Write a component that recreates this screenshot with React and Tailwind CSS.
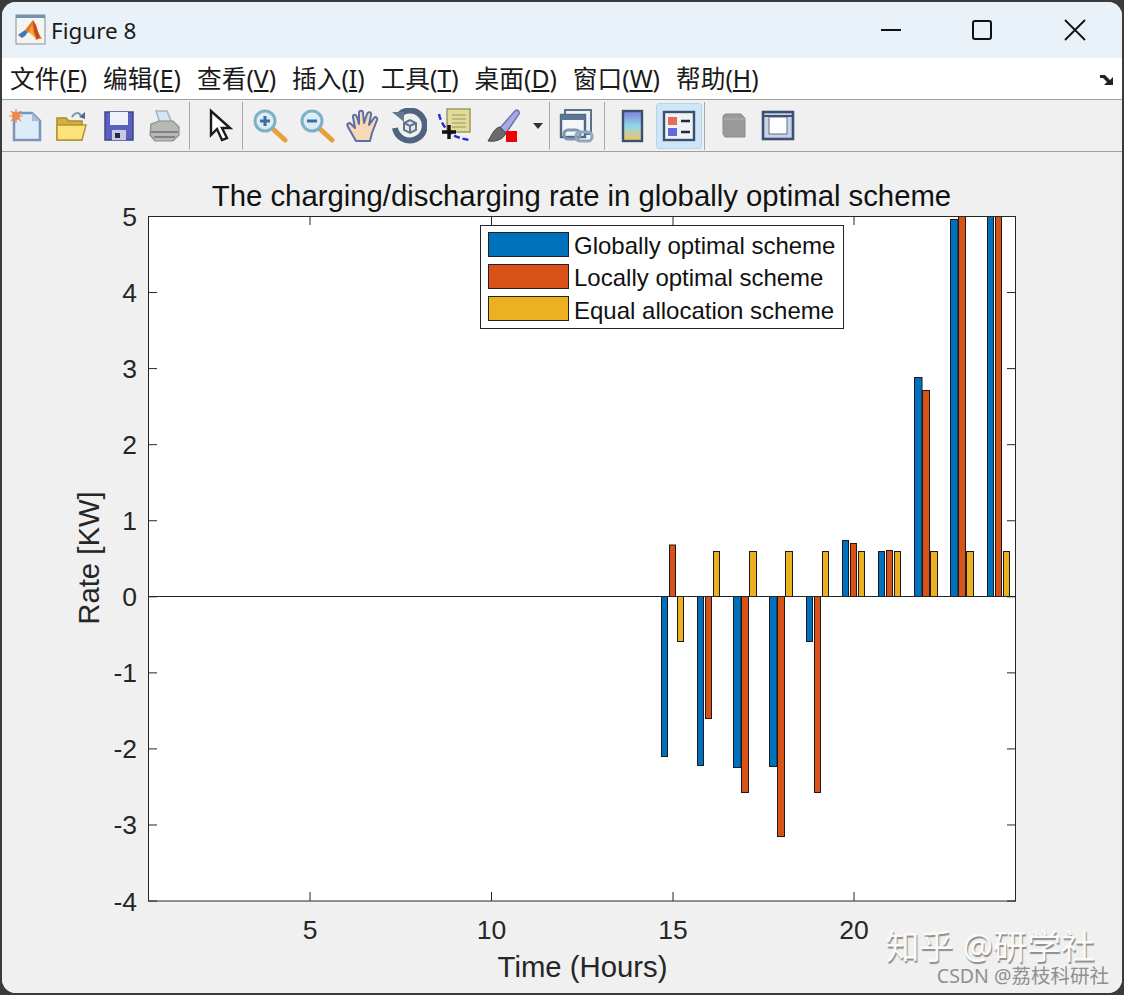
import React from "react";

const BLUE = "#0072bd";
const ORANGE = "#d95319";
const YELLOW = "#edb120";
const ZERO = 596.5;

// each bar: x, right edge, tip y
const bars = [
  [661.5, 667.5, 756.5, BLUE], [669.5, 675.5, 545, ORANGE], [677.5, 683.5, 641.5, YELLOW],
  [697.5, 703.5, 765.5, BLUE], [705.5, 711.5, 718.5, ORANGE], [713.5, 719.5, 551.5, YELLOW],
  [733.5, 741, 767.5, BLUE], [741.5, 748.5, 792.5, ORANGE], [749.5, 756.5, 551.5, YELLOW],
  [769.5, 777, 766.5, BLUE], [777.5, 784.5, 836.5, ORANGE], [785.5, 792.5, 551.5, YELLOW],
  [806.5, 812.5, 641.5, BLUE], [814.5, 820.5, 792.5, ORANGE], [822.5, 828.5, 551.5, YELLOW],
  [842.5, 848.5, 540.5, BLUE], [850.5, 856.5, 543.5, ORANGE], [858.5, 864.5, 551.5, YELLOW],
  [878.5, 884.5, 551.5, BLUE], [886.5, 892.5, 550.5, ORANGE], [894.5, 900.5, 551.5, YELLOW],
  [914.5, 922, 377.5, BLUE], [922.5, 929.5, 390.5, ORANGE], [930.5, 937.5, 551.5, YELLOW],
  [950.5, 958, 219.5, BLUE], [958.5, 965.5, 216.5, ORANGE], [966.5, 973.5, 551.5, YELLOW],
  [987.5, 993.5, 216.5, BLUE], [995.5, 1001.5, 216.5, ORANGE], [1003.5, 1009.5, 551.5, YELLOW],
];

const yTicks = [5, 4, 3, 2, 1, 0, -1, -2, -3, -4];
const xTicks = [[5, 310], [10, 491.5], [15, 673], [20, 854]];

const menus = [
  ["文件(", "F"], ["编辑(", "E"], ["查看(", "V"], ["插入(", "I"],
  ["工具(", "T"], ["桌面(", "D"], ["窗口(", "W"], ["帮助(", "H"],
];

function MatlabIcon() {
  return (
    <svg width="32" height="32" viewBox="0 0 32 32" className="shrink-0">
      <rect x="1" y="1" width="29" height="29" fill="#f4f4f2" stroke="#8a9098" />
      <rect x="1" y="1" width="29" height="3" fill="#6f93b5" />
      <path d="M3 21 10 16 13 18 10 22 7 24Z" fill="#3f78b4" />
      <path d="M10 16 18 6 23 18 27 25 22 24 17 20 13 18Z" fill="#e8762a" />
      <path d="M18 6 21 11 25 24 21 26 19 17Z" fill="#c8481c" />
      <path d="M14 18 17 11 19 19 22 26 17 21Z" fill="#f3a53a" />
    </svg>
  );
}

function NewIcon() {
  return (
    <svg width="34" height="34" viewBox="0 0 34 34" className="ml-[9px] shrink-0">
      <path d="M5 4H23L31 12V31H5Z" fill="#dcecfa" stroke="#7d93b8" strokeWidth="2.5" />
      <path d="M23 4V12H31Z" fill="#a9bcd6" />
      <circle cx="7" cy="7" r="4" fill="#ef8a4a" />
      <path d="M7 0V14M0 7H14M2 2 12 12M12 2 2 12" stroke="#ef8a4a" strokeWidth="1.2" />
    </svg>
  );
}

function OpenIcon() {
  return (
    <svg width="34" height="34" viewBox="0 0 34 34" className="ml-[11px] shrink-0">
      <path d="M3 9H12L15 12H28V31H3Z" fill="#d4b03c" stroke="#a88c2c" strokeWidth="1.5" />
      <path d="M3 31 3 16H32L28 31Z" fill="#fbe27a" stroke="#b3952f" strokeWidth="1.5" />
      <path d="M18 8C21 3 25 3 27 7" fill="none" stroke="#7f93a8" strokeWidth="2" />
      <path d="M25 8 31 3V10Z" fill="#4b6a90" />
    </svg>
  );
}

function SaveIcon() {
  return (
    <svg width="34" height="34" viewBox="0 0 34 34" className="ml-[14px] shrink-0">
      <path d="M3 3H31V31H3Z" fill="#5a5fc0" stroke="#3d4690" strokeWidth="1.5" />
      <rect x="8" y="3" width="18" height="13" fill="#eef0fa" />
      <rect x="10" y="21" width="14" height="10" fill="#c8cbe0" />
      <rect x="13" y="24" width="5" height="5" fill="#25284a" />
    </svg>
  );
}

function PrintIcon() {
  return (
    <svg width="34" height="34" viewBox="0 0 34 34" className="ml-[11px] shrink-0">
      <path d="M9 2H20L25 14H13Z" fill="#d6e4f2" stroke="#9fb3c6" strokeWidth="1.5" />
      <path d="M4 15 12 12H26L32 18V26L26 32H8L3 26Z" fill="#b8b8b6" stroke="#8b8b88" strokeWidth="1.2" />
      <path d="M4 23H31M7 28H28" stroke="#6f6f6d" strokeWidth="1.5" />
    </svg>
  );
}

function PointerIcon() {
  return (
    <svg width="26" height="36" viewBox="0 0 26 36" className="ml-[17px] shrink-0">
      <path d="M4 3V27L10 21 15 32 20 30 15 20H23Z" fill="#fff" stroke="#1c1c1c" strokeWidth="2.4" strokeLinejoin="miter" />
    </svg>
  );
}

function ZoomIcon({ minus, className }) {
  return (
    <svg width="36" height="36" viewBox="0 0 36 36" className={className}>
      <path d="M21 21 33 32" stroke="#e59f3c" strokeWidth="5" strokeLinecap="round" />
      <circle cx="13" cy="13" r="10" fill="#dcecf6" stroke="#7fb0c8" strokeWidth="3" />
      <path d={minus ? "M8 13H18" : "M8 13H18M13 8V18"} stroke="#3a6f9f" strokeWidth="3" />
    </svg>
  );
}

function HandIcon() {
  return (
    <svg width="36" height="36" viewBox="0 0 36 36" className="ml-[10px] shrink-0">
      <path
        d="M11 33 3 19C1 16 4 14 6 16L10 20 8 9C8 6 11 6 12 9L14 16 14 5C14 2 18 2 18 5L19 15 22 6C23 3 27 4 26 7L24 17 29 10C31 8 33 10 32 12L27 25 25 33Z"
        fill="#f8d9b6"
        stroke="#5a6fa8"
        strokeWidth="2"
        strokeLinejoin="round"
      />
    </svg>
  );
}

function RotateIcon() {
  return (
    <svg width="36" height="36" viewBox="0 0 36 36" className="ml-[10px] shrink-0">
      <path d="M8 7A15 15 0 1 1 4 20" fill="none" stroke="#4f6480" strokeWidth="6" />
      <path d="M1 4H13V14Z" fill="#66788f" />
      <path d="M13 15 19 12 25 15V22L19 25 13 22Z" fill="#e8e8e8" stroke="#62748c" strokeWidth="2" />
      <path d="M13 15 19 18 25 15M19 18V25" fill="none" stroke="#62748c" strokeWidth="2" />
    </svg>
  );
}

function DatatipIcon() {
  return (
    <svg width="36" height="36" viewBox="0 0 36 36" className="ml-[9px] shrink-0">
      <path d="M3 6C5 16 12 24 17 27 23 30 28 31 33 32" fill="none" stroke="#2727d8" strokeWidth="2.4" strokeDasharray="6 3" />
      <rect x="11" y="1" width="23" height="23" fill="#e2dc9a" stroke="#9a9a66" strokeWidth="1.5" />
      <path d="M16 7H30M16 11H30M16 15H30M16 19H30" stroke="#b3ad6e" strokeWidth="1.5" />
      <path d="M13 17V31M6 24H20" stroke="#111" strokeWidth="3.4" />
    </svg>
  );
}

function BrushIcon() {
  return (
    <svg width="36" height="36" viewBox="0 0 36 36" className="ml-[14px] shrink-0">
      <path d="M14 20 29 3C31 1 34 3 33 6L20 25Z" fill="#a9a7e6" stroke="#6f74a8" strokeWidth="1.5" />
      <path d="M14 19C8 20 6 27 2 33 9 34 17 32 20 25Z" fill="#6b6b6b" stroke="#444" strokeWidth="1" />
      <rect x="20" y="23" width="11" height="11" fill="#f00000" />
    </svg>
  );
}

function LinkIcon() {
  return (
    <svg width="36" height="36" viewBox="0 0 36 36" className="ml-[9px] shrink-0">
      <rect x="6" y="2" width="26" height="24" fill="#eef1f5" stroke="#5b7188" strokeWidth="2" />
      <rect x="2" y="7" width="24" height="22" fill="#f4f6f8" stroke="#4f6780" strokeWidth="2.4" />
      <rect x="2" y="7" width="24" height="5" fill="#5b7593" />
      <rect x="5" y="22" width="16" height="9" rx="4" fill="none" stroke="#7f96ae" strokeWidth="3" />
      <rect x="17" y="24" width="16" height="9" rx="4" fill="none" stroke="#91a7bd" strokeWidth="3" />
    </svg>
  );
}

function ColorbarIcon() {
  return (
    <svg width="26" height="34" viewBox="0 0 26 34" className="ml-[15px] shrink-0">
      <defs>
        <linearGradient id="cbar" x1="0" x2="0" y1="0" y2="1">
          <stop offset="0" stopColor="#7d7fe0" />
          <stop offset="0.5" stopColor="#8fd8e8" />
          <stop offset="1" stopColor="#f6c45e" />
        </linearGradient>
      </defs>
      <rect x="3" y="2" width="19" height="30" fill="url(#cbar)" stroke="#3c4f6e" strokeWidth="2.4" />
    </svg>
  );
}

function LegendIcon() {
  return (
    <svg width="34" height="34" viewBox="0 0 34 34">
      <rect x="2" y="3" width="30" height="28" fill="#eef3f8" stroke="#3c4f6e" strokeWidth="2.4" />
      <rect x="6" y="8" width="9" height="8" fill="#e8685a" />
      <rect x="6" y="19" width="9" height="8" fill="#6268e0" />
      <path d="M19 12H28M19 23H28" stroke="#2a2a2a" strokeWidth="2.6" />
    </svg>
  );
}

function GrayIcon() {
  return (
    <svg width="26" height="26" viewBox="0 0 26 26" className="ml-[16px] shrink-0">
      <path d="M4 1H20L24 5V24H4L2 21V3Z" fill="#9a9a9a" stroke="#8a8a8a" />
      <path d="M3 6H24" stroke="#b0b0b0" />
    </svg>
  );
}

function FrameIcon() {
  return (
    <svg width="34" height="32" viewBox="0 0 34 32" className="ml-[14px] shrink-0">
      <rect x="2" y="2" width="30" height="27" fill="#c7d3e3" stroke="#3c4f74" strokeWidth="2.6" />
      <rect x="8" y="7" width="18" height="17" fill="#fdfdfd" stroke="#5a6f90" />
      <path d="M2 6H32" stroke="#3c4f74" strokeWidth="2" />
    </svg>
  );
}

function Sep({ className }) {
  return <div className={`w-px h-[48px] bg-[#a8a8a8] shrink-0 ${className}`} />;
}

export default function App() {
  return (
    <div className="w-[1124px] h-[995px] bg-[#3b3b3b] p-[2px] font-['Noto_Sans','Noto_Sans_CJK_SC',sans-serif] overflow-hidden">
      <div className="w-[1120px] h-[991px] rounded-[14px] overflow-hidden bg-[#f0f0f0] flex flex-col relative">
        {/* title bar */}
        <div className="h-[56px] bg-[#e9f2f8] flex items-center shrink-0">
          <div className="ml-[13px]">
            <MatlabIcon />
          </div>
          <span className="ml-[4px] pt-[2px] text-[22.5px] text-[#1a1a1a] leading-none">Figure 8</span>
          <div className="ml-auto flex items-center">
            <div className="w-[20px] h-[2px] bg-[#111]" />
            <div className="ml-[71px] w-[20px] h-[20px] border-2 border-[#111] rounded-[3px]" />
            <svg width="22" height="22" viewBox="0 0 22 22" className="ml-[72px] mr-[36px]">
              <path d="M1 1 21 21M21 1 1 21" stroke="#111" strokeWidth="1.8" />
            </svg>
          </div>
        </div>

        {/* menu bar */}
        <div className="h-[41px] bg-white border-b border-[#a0a0a0] flex items-center shrink-0 box-content">
          <div className="ml-[8px] pt-[2px] flex gap-[16px] text-[24.7px] text-[#1a1a1a] leading-none">
            {menus.map(([label, key]) => (
              <span key={key}>
                {label}
                <span className="underline underline-offset-2">{key}</span>)
              </span>
            ))}
          </div>
          <svg width="16" height="14" viewBox="0 0 16 14" className="ml-auto mr-[7px]">
            <path d="M1 3H6L11 8 14 5V13H5L8 10 4 6H1Z" fill="#222" />
          </svg>
        </div>

        {/* toolbar */}
        <div className="h-[51px] bg-[#f0f0f0] border-b border-[#a0a0a0] flex items-center shrink-0 box-content -ml-[2px]">
          <NewIcon />
          <OpenIcon />
          <SaveIcon />
          <PrintIcon />
          <Sep className="ml-[8px]" />
          <PointerIcon />
          <Sep className="ml-[9px]" />
          <ZoomIcon className="ml-[9px] shrink-0" />
          <ZoomIcon minus className="ml-[11px] shrink-0" />
          <HandIcon />
          <RotateIcon />
          <DatatipIcon />
          <BrushIcon />
          <div className="ml-[11px] w-0 h-0 border-x-[5px] border-x-transparent border-t-[6px] border-t-[#333] shrink-0" />
          <Sep className="ml-[6px]" />
          <LinkIcon />
          <Sep className="ml-[9px]" />
          <ColorbarIcon />
          <div className="ml-[10px] w-[46px] h-[46px] bg-[#cfe6f8] border border-[#b3d4ee] rounded-[3px] flex items-center justify-center shrink-0">
            <LegendIcon />
          </div>
          <Sep className="ml-[2px]" />
          <GrayIcon />
          <FrameIcon />
        </div>

        {/* plot */}
        <div className="relative flex-1 bg-[#f0f0f0]">
          <svg
            width="1120"
            height="841"
            viewBox="2 152 1120 841"
            className="block font-['Liberation_Sans',sans-serif] fill-[#262626]"
          >
            <rect x="148.5" y="216.5" width="867" height="684.5" fill="#fff" />
            {bars.map(([x0, x1, tip, color], i) => (
              <rect
                key={i}
                x={x0}
                y={Math.min(tip, ZERO)}
                width={x1 - x0}
                height={Math.abs(ZERO - tip)}
                fill={color}
                stroke="#1a1a1a"
                strokeWidth="1"
              />
            ))}
            <path d={`M148.5 ${ZERO}H1015.5`} stroke="#262626" strokeWidth="1" fill="none" />
            <rect x="148.5" y="216.5" width="867" height="684.5" fill="none" stroke="#262626" strokeWidth="1" />

            {yTicks.map((v) => {
              const y = 216.5 + (5 - v) * 76.06;
              return (
                <g key={v}>
                  <path d={`M148.5 ${y}H157M1015.5 ${y}H1007`} stroke="#262626" fill="none" />
                  <text x="137" y={y + 9.5} textAnchor="end" className="text-[26.5px]">
                    {v}
                  </text>
                </g>
              );
            })}
            {xTicks.map(([v, x]) => (
              <g key={v}>
                <path d={`M${x} 901V892M${x} 216.5V225`} stroke="#262626" fill="none" />
                <text x={x} y="939" textAnchor="middle" className="text-[26.5px]">
                  {v}
                </text>
              </g>
            ))}

            <text x="581.5" y="206" textAnchor="middle" className="text-[29.3px] fill-[#111]">
              The charging/discharging rate in globally optimal scheme
            </text>
            <text x="582.5" y="977" textAnchor="middle" className="text-[29.3px]">
              Time (Hours)
            </text>
            <text transform="translate(99 558) rotate(-90)" textAnchor="middle" className="text-[29.3px]">
              Rate [KW]
            </text>
          </svg>

          {/* legend */}
          <div className="absolute left-[478px] top-[73px] w-[364px] h-[104px] bg-white border border-[#262626] flex flex-col gap-[7px] pl-[7px] pt-[6px] font-['Liberation_Sans',sans-serif] text-[24px] text-[#111] leading-none">
            <div className="flex items-center h-[25px]">
              <div className="w-[81px] h-[25px] border border-[#222] bg-[#0072bd]" />
              <span className="ml-[5px] pt-[2px]">Globally optimal scheme</span>
            </div>
            <div className="flex items-center h-[25px]">
              <div className="w-[81px] h-[25px] border border-[#222] bg-[#d95319]" />
              <span className="ml-[5px] pt-[2px]">Locally optimal scheme</span>
            </div>
            <div className="flex items-center h-[25px]">
              <div className="w-[81px] h-[25px] border border-[#222] bg-[#edb120]" />
              <span className="ml-[5px] pt-[4px]">Equal allocation scheme</span>
            </div>
          </div>

          {/* watermarks */}
          <div className="absolute right-[27px] bottom-[30px] text-[34px] leading-none text-[#fafafa] whitespace-nowrap [text-shadow:1px_2px_1px_#8c8c8c]">
            知乎 @研学社
          </div>
          <div className="absolute right-[13px] bottom-[8px] text-[19.5px] leading-none text-[#8f8f8f] whitespace-nowrap">
            CSDN @荔枝科研社
          </div>
        </div>
      </div>
    </div>
  );
}
